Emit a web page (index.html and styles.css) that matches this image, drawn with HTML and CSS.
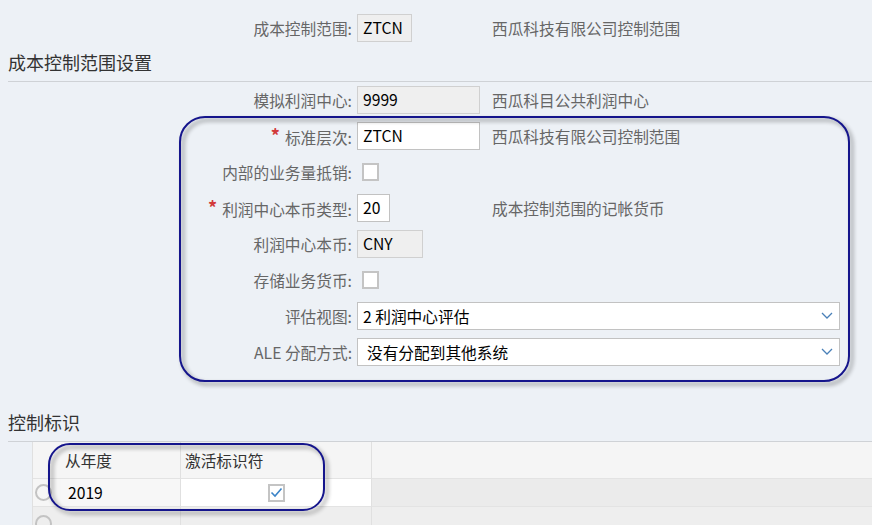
FILE: index.html
```html
<!DOCTYPE html>
<html lang="zh-CN">
<head>
<meta charset="utf-8">
<title>成本控制范围设置</title>
<link rel="stylesheet" href="styles.css">
</head>
<body>
<div class="page">
  <div class="form form-top">
    <div class="label">成本控制范围:</div>
    <div class="field"><span class="input ro w55">ZTCN</span></div>
    <div class="desc">西瓜科技有限公司控制范围</div>
  </div>

  <h2 class="section">成本控制范围设置</h2>

  <div class="form">
    <div class="label">模拟利润中心:</div>
    <div class="field"><span class="input ro w123">9999</span></div>
    <div class="desc">西瓜科目公共利润中心</div>

    <div class="label"><span class="req">*</span>标准层次:</div>
    <div class="field"><span class="input w123">ZTCN</span></div>
    <div class="desc">西瓜科技有限公司控制范围</div>

    <div class="label">内部的业务量抵销:</div>
    <div class="field"><span class="cb"></span></div>
    <div class="desc"></div>

    <div class="label"><span class="req">*</span>利润中心本币类型:</div>
    <div class="field"><span class="input w33">20</span></div>
    <div class="desc">成本控制范围的记帐货币</div>

    <div class="label">利润中心本币:</div>
    <div class="field"><span class="input ro w66">CNY</span></div>
    <div class="desc"></div>

    <div class="label">存储业务货币:</div>
    <div class="field"><span class="cb"></span></div>
    <div class="desc"></div>

    <div class="label">评估视图:</div>
    <div class="field span2">
      <div class="select"><span>2 利润中心评估</span>
        <svg class="chev" width="12" height="8" viewBox="0 0 12 8"><polyline points="1,1 6,6 11,1" fill="none" stroke="#4a80b8" stroke-width="1.3"/></svg>
      </div>
    </div>

    <div class="label">ALE 分配方式:</div>
    <div class="field span2">
      <div class="select"><span class="ind">没有分配到其他系统</span>
        <svg class="chev" width="12" height="8" viewBox="0 0 12 8"><polyline points="1,1 6,6 11,1" fill="none" stroke="#4a80b8" stroke-width="1.3"/></svg>
      </div>
    </div>
  </div>

  <h2 class="section section-2">控制标识</h2>

  <div class="table">
    <div class="cell hd sel"></div>
    <div class="cell hd c1">从年度</div>
    <div class="cell hd c2">激活标识符</div>
    <div class="cell hd fill"></div>

    <div class="cell r1 sel"><span class="radio"></span></div>
    <div class="cell r1 c1 val">2019</div>
    <div class="cell r1 c2 white"><span class="cb checked"><svg width="13" height="11" viewBox="0 0 13 11"><polyline points="1.5,5.5 5,9 11.5,1.5" fill="none" stroke="#3b84c8" stroke-width="1.6"/></svg></span></div>
    <div class="cell r1 fill"></div>

    <div class="cell r2 sel"><span class="radio"></span></div>
    <div class="cell r2 c1"></div>
    <div class="cell r2 c2"></div>
    <div class="cell r2 fill"></div>
  </div>

  <div class="note note-1"></div>
  <div class="note note-2"></div>
</div>
</body>
</html>
```

FILE: styles.css
```css
html, body {
  margin: 0;
  padding: 0;
}
body {
  background: #edf1f6;
  font-family: "Noto Sans CJK SC", "Noto Sans", sans-serif;
  font-size: 15.7px;
  color: #666;
  width: 872px;
  height: 525px;
  overflow: hidden;
}
.page {
  position: relative;
  width: 872px;
  height: 525px;
}

/* form grid */
.form {
  display: grid;
  grid-template-columns: 352px 130px 348px;
  column-gap: 5px;
  grid-auto-rows: 36px;
  align-items: center;
}
.form-top {
  padding-top: 10px;
}
.label {
  text-align: right;
  color: #666;
  white-space: nowrap;
}
.req {
  color: #d23a3a;
  font-weight: bold;
  font-size: 18px;
  margin-right: 5px;
  position: relative;
  top: -1px;
}
.field {
  display: flex;
  align-items: center;
}
.span2 {
  grid-column: 2 / span 2;
}
.desc {
  color: #666;
  white-space: nowrap;
}

.input {
  box-sizing: border-box;
  height: 28px;
  line-height: 26px;
  border: 1px solid #c2c2c2;
  background: #ffffff;
  color: #000;
  padding-left: 5px;
  display: inline-block;
}
.input.ro {
  background: #efefef;
  border-color: #d0d0d0;
}
.w55 { width: 55px; }
.w123 { width: 123px; }
.w33 { width: 33px; }
.w66 { width: 66px; }

.cb {
  box-sizing: border-box;
  width: 17px;
  height: 18px;
  border: 2px solid #c4c4c4;
  background: #fff;
  display: inline-flex;
  align-items: center;
  justify-content: center;
  margin-left: 5px;
}
.cb.checked {
  margin-left: 0;
}

.select {
  box-sizing: border-box;
  width: 483px;
  height: 28px;
  border: 1px solid #c2c2c2;
  background: #fff;
  color: #000;
  display: flex;
  align-items: center;
  justify-content: space-between;
  padding: 0 6px 0 5px;
}
.select .ind {
  padding-left: 4px;
}
.chev {
  display: block;
}

/* section headings */
.section {
  margin: 0 0 0 8px;
  font-size: 18px;
  font-weight: normal;
  color: #333;
  line-height: 32px;
  padding-bottom: 3px;
  border-bottom: 1px solid #cfd2d6;
}
.section-2 {
  padding-top: 36px;
}

/* table */
.table {
  margin-left: 32px;
  display: grid;
  grid-template-columns: 28px 120px 191px 1fr;
  grid-template-rows: 37px 28px 28px;
  border-left: 1px solid #e0e0e0;
}
.cell {
  box-sizing: border-box;
  border-bottom: 1px solid #e3e3e3;
  display: flex;
  align-items: center;
  color: #333;
}
.c1, .c2 {
  border-right: 1px solid #e0e0e0;
}
.hd {
  background: #f5f5f5;
}
.hd.c1 { padding-left: 4px; }
.hd.c2 { padding-left: 4px; }
.r1 { background: #f6f6f6; }
.r1.fill { background: #ebebeb; }
.r2 { background: #eeeeee; }
.white {
  background: #ffffff;
  justify-content: center;
}
.val {
  color: #000;
  padding-left: 7px;
  background: #f7f7f7;
}
.sel {
  padding-left: 2px;
}
.radio {
  box-sizing: border-box;
  width: 17px;
  height: 17px;
  border: 2px solid #c3c3c3;
  border-radius: 50%;
  display: inline-block;
}
.r2 .radio {
  position: relative;
  top: 3px;
}

/* annotations overlay */
.note {
  position: absolute;
  box-sizing: border-box;
  border: 2px solid #15158c;
  filter: drop-shadow(3px 3px 2px rgba(0, 0, 0, 0.45));
}
.note-1 {
  left: 179px;
  top: 116px;
  width: 671px;
  height: 266px;
  border-radius: 26px;
}
.note-2 {
  left: 48px;
  top: 443px;
  width: 277px;
  height: 68px;
  border-radius: 22px;
}
```
